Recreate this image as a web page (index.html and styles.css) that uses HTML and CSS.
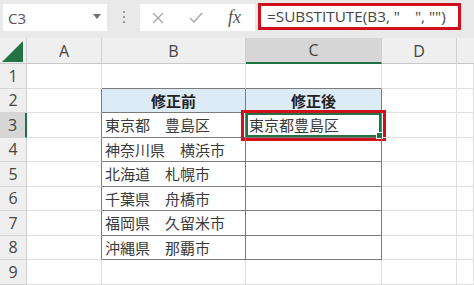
FILE: index.html
```html
<!DOCTYPE html>
<html lang="ja">
<head>
<meta charset="utf-8">
<link rel="stylesheet" href="styles.css">
</head>
<body>
<div class="app">
  <div class="topbar">
    <div class="namebox">
      <span class="ref">C3</span>
      <svg class="caret" width="8" height="5" viewBox="0 0 8 5"><path d="M0 0 L8 0 L4 5 Z" fill="#707070"/></svg>
    </div>
    <div class="grip"><i></i><i></i><i></i></div>
    <div class="fxbtns">
      <svg class="ico" width="14" height="14" viewBox="0 0 14 14"><path d="M2 2 L12 12 M12 2 L2 12" stroke="#a6a6a6" stroke-width="1.3" fill="none"/></svg>
      <svg class="ico" width="16" height="14" viewBox="0 0 16 14"><path d="M2 7 L6 11 L14 2" stroke="#a6a6a6" stroke-width="1.4" fill="none"/></svg>
      <span class="fx">fx</span>
    </div>
    <div class="formula">=SUBSTITUTE(B3, "　", "")</div>
  </div>
  <div class="sheet">
    <div class="corner"><svg width="22" height="21" viewBox="0 0 22 21"><path d="M0 21 L21 0 L21 21 Z" fill="#217346"/></svg></div>
    <div class="ch">A</div>
    <div class="ch">B</div>
    <div class="ch sel">C</div>
    <div class="ch">D</div>
    <div class="ch last"></div>

    <div class="rh">1</div>
    <div class="c"></div><div class="c tb"></div><div class="c tb"></div><div class="c"></div><div class="c"></div>

    <div class="rh">2</div>
    <div class="c tr"></div><div class="c t head">修正前</div><div class="c t head">修正後</div><div class="c"></div><div class="c"></div>

    <div class="rh selr">3</div>
    <div class="c tr"></div><div class="c t">東京都　豊島区</div><div class="c t active"><span>東京都豊島区</span><div class="hl"></div><div class="handle"></div></div><div class="c"></div><div class="c"></div>

    <div class="rh">4</div>
    <div class="c tr"></div><div class="c t">神奈川県　横浜市</div><div class="c t"></div><div class="c"></div><div class="c"></div>

    <div class="rh">5</div>
    <div class="c tr"></div><div class="c t">北海道　札幌市</div><div class="c t"></div><div class="c"></div><div class="c"></div>

    <div class="rh">6</div>
    <div class="c tr"></div><div class="c t">千葉県　舟橋市</div><div class="c t"></div><div class="c"></div><div class="c"></div>

    <div class="rh">7</div>
    <div class="c tr"></div><div class="c t">福岡県　久留米市</div><div class="c t"></div><div class="c"></div><div class="c"></div>

    <div class="rh">8</div>
    <div class="c tr"></div><div class="c t">沖縄県　那覇市</div><div class="c t"></div><div class="c"></div><div class="c"></div>

    <div class="rh">9</div>
    <div class="c"></div><div class="c"></div><div class="c"></div><div class="c"></div><div class="c"></div>
  </div>
</div>
</body>
</html>
```
FILE: styles.css
```css
html, body {
  margin: 0;
  padding: 0;
  background: #ffffff;
}
.app {
  width: 474px;
  height: 285px;
  overflow: hidden;
  font-family: "Noto Sans CJK JP", "Liberation Sans", sans-serif;
}
.topbar {
  height: 38px;
  box-sizing: border-box;
  background: #e9e9e9;
  padding: 3px 0 0 3px;
  display: flex;
  align-items: flex-start;
}
.namebox {
  width: 104px;
  height: 27px;
  margin-top: 1px;
  background: #fff;
  display: flex;
  align-items: center;
  justify-content: space-between;
  padding: 0 6px 0 5px;
  box-sizing: border-box;
}
.ref {
  font-family: "Open Sans", "Liberation Sans", sans-serif;
  font-size: 15px;
  color: #555;
}
.caret { margin-bottom: 2px; }
.grip {
  width: 33px;
  display: flex;
  flex-direction: column;
  align-items: center;
  gap: 3px;
  padding-top: 8px;
}
.grip i {
  display: block;
  width: 2px;
  height: 2px;
  background: #9a9a9a;
}
.fxbtns {
  width: 115px;
  height: 27px;
  margin-top: 1px;
  background: #fff;
  display: flex;
  align-items: center;
  box-sizing: border-box;
  padding-left: 11px;
}
.fxbtns .ico { margin-right: 23px; }
.fxbtns .ico + .ico { margin-right: 24px; }
.fx {
  font-family: "Liberation Serif", serif;
  font-style: italic;
  font-size: 18px;
  color: #555;
}
.formula {
  margin-left: 3px;
  width: 203px;
  height: 27px;
  box-sizing: border-box;
  border: 3px solid #d0101b;
  background: #fff;
  font-family: "Open Sans", "Liberation Sans", sans-serif;
  font-size: 15.3px;
  color: #444;
  line-height: 21px;
  padding-left: 6px;
  white-space: nowrap;
  overflow: hidden;
}
.sheet {
  display: grid;
  grid-template-columns: 27px 75px 144px 136px 75px 1fr;
  grid-template-rows: 26px repeat(9, 24.5px);
}
.corner {
  background: #efefef;
  border-right: 1px solid #d0d0d0;
  border-bottom: 1px solid #c8c8c8;
  display: flex;
  align-items: flex-end;
  justify-content: center;
  padding-bottom: 1px;
  box-sizing: border-box;
}
.ch {
  background: #efefef;
  border-right: 1px solid #d0d0d0;
  border-bottom: 1px solid #c8c8c8;
  box-sizing: border-box;
  display: flex;
  align-items: center;
  justify-content: center;
  font-family: "Open Sans", "Liberation Sans", sans-serif;
  font-size: 16px;
  color: #444;
}
.ch.sel {
  background: #d6d6d6;
  border-bottom: 2px solid #217346;
}
.ch.last { border-right: none; }
.rh {
  background: #efefef;
  border-right: 1px solid #d0d0d0;
  border-bottom: 1px solid #d6d6d6;
  box-sizing: border-box;
  display: flex;
  align-items: center;
  justify-content: center;
  font-family: "Open Sans", "Liberation Sans", sans-serif;
  font-size: 16px;
  color: #444;
}
.rh.selr {
  background: #d6d6d6;
  border-right: 2px solid #217346;
}
.c {
  border-right: 1px solid #e0e0e0;
  border-bottom: 1px solid #e0e0e0;
  box-sizing: border-box;
  display: flex;
  align-items: center;
  padding-left: 3px;
  font-size: 15px;
  color: #3a3a3a;
  white-space: nowrap;
  position: relative;
}
.c.tb { border-bottom-color: #7b7b7b; }
.c.tr { border-right-color: #7b7b7b; }
.c.t {
  border-right-color: #7b7b7b;
  border-bottom-color: #7b7b7b;
}
.c.head {
  background: #ddebf7;
  justify-content: center;
  font-weight: bold;
  color: #222;
  padding-left: 0;
}
.c.active {
  box-shadow: inset 0 0 0 2px #217346;
}
.hl {
  position: absolute;
  left: -5px;
  top: -3px;
  right: -5px;
  bottom: -4px;
  border: 3px solid #d0101b;
  pointer-events: none;
}
.handle {
  position: absolute;
  right: -2px;
  bottom: -2px;
  width: 5px;
  height: 5px;
  background: #217346;
  border: 1px solid #fff;
}
```
